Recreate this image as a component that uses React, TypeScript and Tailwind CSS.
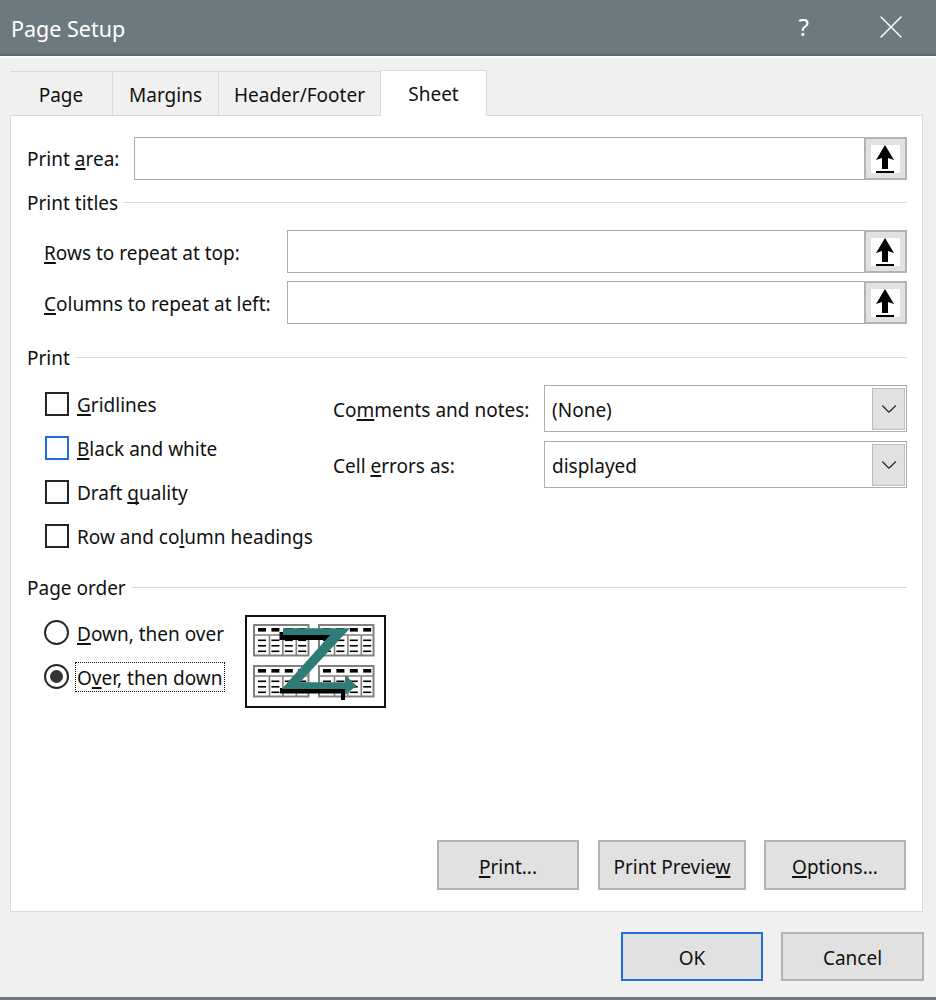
import { ChevronDown, X } from "lucide-react";
import type { ReactNode } from "react";

function U({ children }: { children: ReactNode }) {
  return <u className="underline decoration-[2px] underline-offset-[2px] [text-decoration-skip-ink:none]">{children}</u>;
}

function UploadIcon() {
  return (
    <svg width="29" height="28" viewBox="0 0 29 28" className="bg-white">
      <path d="M14 0 L23 15 L17 13 L17 24 L11 24 L11 13 L5 15 Z" fill="#000" />
      <rect x="5" y="26" width="18" height="2" fill="#000" />
    </svg>
  );
}

function RefInput({ className }: { className: string }) {
  return (
    <div className={`flex h-[43px] border border-[#adadad] bg-white ${className}`}>
      <div className="flex-1" />
      <div className="flex w-[43px] -my-px -mr-px items-center justify-center border-2 border-[#b3b3b3] bg-[#e1e1e1]">
        <UploadIcon />
      </div>
    </div>
  );
}

function SectionTitle({ label, className }: { label: string; className: string }) {
  return (
    <div className={`flex items-center gap-[6px] ${className}`}>
      <span className="translate-y-px leading-[26px]">{label}</span>
      <div className="h-px flex-1 bg-[#d9d9d9]" />
    </div>
  );
}

function Check({ blue, children }: { blue?: boolean; children: ReactNode }) {
  return (
    <div className="flex h-[24px] items-center gap-[8px]">
      <div className={`h-[24px] w-[24px] border-2 bg-white ${blue ? "border-[#1f6fd6]" : "border-[#262626]"}`} />
      <span className="translate-y-px leading-[24px]">{children}</span>
    </div>
  );
}

function Select({ value, className }: { value: string; className: string }) {
  return (
    <div className={`flex items-stretch border border-[#adadad] bg-white ${className}`}>
      <span className="flex-1 translate-y-[2px] pl-[7px] leading-[44px]">{value}</span>
      <div className="m-[1px] mt-[2px] flex w-[33px] items-center justify-center border border-[#bdbdbd] bg-[#e1e1e1]">
        <ChevronDown size={26} strokeWidth={1} color="#222" />
      </div>
    </div>
  );
}

function Btn({ children, className }: { children: ReactNode; className: string }) {
  return (
    <div className={`flex items-center justify-center border-2 bg-[#e1e1e1] ${className}`}>
      <span className="translate-y-[2px] leading-[26px]">{children}</span>
    </div>
  );
}

function MiniSheet({ x, y }: { x: number; y: number }) {
  const cols = [0, 13.4, 26.8, 40.2];
  return (
    <g transform={`translate(${x} ${y})`}>
      <rect x="1" y="1" width="54.5" height="30.5" fill="#fff" stroke="#808080" strokeWidth="2" />
      <line x1="0" y1="11" x2="56" y2="11" stroke="#808080" strokeWidth="1.6" />
      {cols.map((c) => (
        <g key={c}>
          {c !== 40.2 && <line x1={c + 16.5} y1="11" x2={c + 16.5} y2="32" stroke="#808080" strokeWidth="1.6" />}
          <rect x={c + 5} y="4" width="8" height="3.6" fill="#000" />
          <rect x={c + 5} y="15.5" width="8" height="1.6" fill="#000" />
          <rect x={c + 5} y="21" width="8" height="1.6" fill="#000" />
          <rect x={c + 5} y="26.5" width="8" height="1.6" fill="#000" />
        </g>
      ))}
    </g>
  );
}

function PageOrderPicture() {
  return (
    <svg width="141" height="93" viewBox="0 0 141 93" className="bg-white">
      <rect x="1" y="1" width="139" height="91" fill="#fff" stroke="#111" strokeWidth="2" />
      <MiniSheet x={8} y={9} />
      <MiniSheet x={73} y={9} />
      <MiniSheet x={8} y={50} />
      <MiniSheet x={73} y={50} />
      <path d="M34.5 17 H87 V25 H34.5 Z" fill="#000" />
      <path d="M35 73 H100 V85 H96 V78.5 H35 Z" fill="#000" />
      <path d="M38 13.3 H105 L55 67.3 H100 V60 L111.7 70.7 L100 80 V74 H36.7 L85 20 H38 Z" fill="#2f7b78" />
    </svg>
  );
}

export default function App() {
  return (
    <div
      className="flex h-[1000px] w-[936px] flex-col overflow-hidden bg-[#f0f0f0] text-[19px] text-[#111]"
      style={{ fontFamily: '"Noto Sans", sans-serif' }}
    >
      <div className="flex h-[56px] shrink-0 items-center border-b-2 border-[#5c686d] bg-[#6c7a80] pl-[11px] text-white">
        <span className="flex-1 translate-y-[2px] text-[21.5px] leading-[56px]">Page Setup</span>
        <span className="mr-[62px] text-[24px]">?</span>
        <X size={40} strokeWidth={0.8} color="#fff" className="mr-[25px]" />
      </div>

      <div className="h-[2px] shrink-0 bg-white" />

      <div className="mt-[11px] flex h-[46px] shrink-0 items-end pl-[10px]">
        <div className="flex h-[44px] w-[103px] items-center justify-center border-t border-r border-[#d9d9d9]"><span className="translate-y-[2px]">Page</span></div>
        <div className="flex h-[44px] w-[106px] items-center justify-center border-t border-r border-[#d9d9d9]"><span className="translate-y-[2px]">Margins</span></div>
        <div className="flex h-[44px] w-[161px] items-center justify-center border-t border-[#d9d9d9]"><span className="translate-y-[2px]">Header/Footer</span></div>
        <div className="z-10 -mb-px flex h-[46px] w-[107px] items-center justify-center border-x border-t border-[#d9d9d9] bg-white"><span className="translate-y-px">Sheet</span></div>
      </div>

      <div className="ml-[10px] flex h-[797px] w-[913px] shrink-0 flex-col border border-[#d9d9d9] bg-white pl-[16px] pr-[15px]">
        <div className="mt-[21px] flex items-center">
          <span className="w-[107px] translate-y-px">Print <U>a</U>rea:</span>
          <RefInput className="flex-1" />
        </div>

        <SectionTitle label="Print titles" className="mt-[9px]" />

        <div className="mt-[15px] flex items-center pl-[17px]">
          <span className="w-[243px] translate-y-[2px]"><U>R</U>ows to repeat at top:</span>
          <RefInput className="flex-1" />
        </div>
        <div className="mt-[8px] flex items-center pl-[17px]">
          <span className="w-[243px] translate-y-[2px]"><U>C</U>olumns to repeat at left:</span>
          <RefInput className="flex-1" />
        </div>

        <SectionTitle label="Print" className="mt-[20px]" />

        <div className="relative mt-[22px] flex">
          <div className="flex w-[306px] flex-col gap-[20px] pl-[18px]">
            <Check><U>G</U>ridlines</Check>
            <Check blue><U>B</U>lack and white</Check>
            <Check>Draft <U>q</U>uality</Check>
            <Check>Row and co<U>l</U>umn headings</Check>
          </div>
          <div className="-mt-[7px] flex flex-1 flex-col gap-[9px]">
            <div className="flex items-center">
              <span className="w-[211px] translate-y-[2px]">Co<U>m</U>ments and notes:</span>
              <Select value="(None)" className="h-[47px] flex-1" />
            </div>
            <div className="flex items-center">
              <span className="w-[211px] translate-y-[2px]">Cell <U>e</U>rrors as:</span>
              <Select value="displayed" className="h-[47px] flex-1" />
            </div>
          </div>
        </div>

        <SectionTitle label="Page order" className="mt-[26px]" />

        <div className="mt-[15px] flex">
          <div className="flex w-[218px] flex-col gap-[19px] pl-[17px] pt-[5px]">
            <div className="flex h-[25px] items-center gap-[7px]">
              <div className="h-[25px] w-[25px] rounded-full border-2 border-[#262626] bg-white" />
              <span className="translate-y-px pl-[1px] leading-[26px]"><U>D</U>own, then over</span>
            </div>
            <div className="flex h-[25px] items-center gap-[6px]">
              <div className="flex h-[25px] w-[25px] items-center justify-center rounded-full border-2 border-[#262626] bg-white">
                <div className="h-[13px] w-[13px] rounded-full bg-[#333]" />
              </div>
              <span className="w-[150px] border border-dotted border-[#111] pl-[1px] pt-[3px] leading-[25px]">O<U>v</U>er, then down</span>
            </div>
          </div>
          <PageOrderPicture />
        </div>

        <div className="mt-[132px] flex justify-end gap-[18px] pr-[1px]">
          <Btn className="mr-px h-[50px] w-[142px] border-[#b3b3b3]"><U>P</U>rint...</Btn>
          <Btn className="h-[50px] w-[148px] border-[#b3b3b3]">Print Previe<U>w</U></Btn>
          <Btn className="h-[50px] w-[142px] border-[#b3b3b3]"><U>O</U>ptions...</Btn>
        </div>
      </div>

      <div className="mt-[20px] flex shrink-0 justify-end gap-[18px] pr-[12px]">
        <Btn className="h-[49px] w-[142px] border-[#1f6fd6] pb-[2px]">OK</Btn>
        <Btn className="h-[49px] w-[143px] border-[#b3b3b3] pb-[2px]">Cancel</Btn>
      </div>

      <div className="mt-[16px] h-[3px] shrink-0 bg-[#6c7a80]" />
      <div className="flex-1 bg-[#d0d0d0]" />
    </div>
  );
}
